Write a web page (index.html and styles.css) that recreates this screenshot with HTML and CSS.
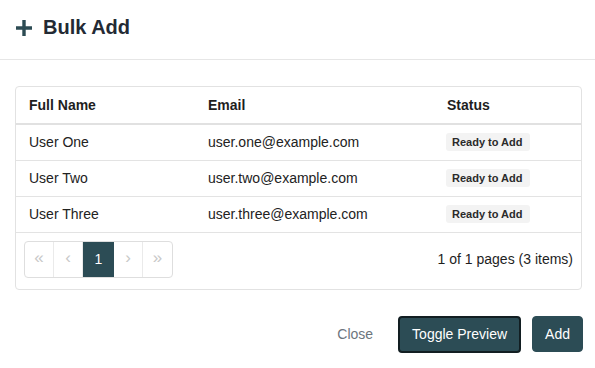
FILE: index.html
```html
<!DOCTYPE html>
<html>
<head>
<meta charset="utf-8">
<link rel="stylesheet" href="styles.css">
</head>
<body>
<div class="modal">
  <div class="modal-header">
    <svg class="plus" width="18" height="18" viewBox="0 0 18 18"><path d="M9 1v16M1 9h16" stroke="#2c4b53" stroke-width="3.4" fill="none"/></svg>
    <h1 class="title">Bulk Add</h1>
  </div>
  <div class="modal-body">
    <div class="card">
      <table class="grid">
        <colgroup><col class="c1"><col class="c2"><col class="c3"></colgroup>
        <thead>
          <tr><th>Full Name</th><th>Email</th><th>Status</th></tr>
        </thead>
        <tbody>
          <tr><td>User One</td><td>user.one@example.com</td><td><span class="badge">Ready to Add</span></td></tr>
          <tr><td>User Two</td><td>user.two@example.com</td><td><span class="badge">Ready to Add</span></td></tr>
          <tr><td>User Three</td><td>user.three@example.com</td><td><span class="badge">Ready to Add</span></td></tr>
        </tbody>
      </table>
      <div class="pager-row">
        <div class="pager">
          <span class="pg">&laquo;</span>
          <span class="pg">&lsaquo;</span>
          <span class="pg active">1</span>
          <span class="pg">&rsaquo;</span>
          <span class="pg">&raquo;</span>
        </div>
        <div class="summary">1 of 1 pages (3 items)</div>
      </div>
    </div>
  </div>
  <div class="modal-footer">
    <button class="btn link">Close</button>
    <button class="btn primary focus">Toggle Preview</button>
    <button class="btn primary">Add</button>
  </div>
</div>
</body>
</html>
```
FILE: styles.css
```css
* { box-sizing: border-box; }
body {
  margin: 0;
  background: #fff;
  font-family: "Liberation Sans", Arial, sans-serif;
  color: #212529;
  font-size: 14px;
}
.modal { width: 595px; }
.modal-header {
  height: 60px;
  border-bottom: 1px solid #e6e6e6;
  display: flex;
  align-items: center;
  padding: 0 15px 4px;
  gap: 10px;
}
.plus { display: block; margin-top: 1px; }
.title {
  margin: 0;
  font-size: 20px;
  font-weight: bold;
  color: #232a34;
}
.modal-body { padding: 26px 13px 0 15px; }
.card {
  border: 1px solid #e2e2e2;
  border-radius: 4px;
}
.grid {
  width: 100%;
  border-collapse: collapse;
  table-layout: fixed;
}
.c1 { width: 179px; }
.c2 { width: 239px; }
.grid th {
  height: 37px;
  text-align: left;
  font-weight: bold;
  padding: 0 13px;
  border-bottom: 2px solid #e1e1e1;
  color: #1e1e1e;
}
.grid td {
  height: 36px;
  padding: 0 13px;
  border-bottom: 1px solid #e3e3e3;
  color: #222;
}
.badge {
  display: inline-block;
  background: #f3f3f3;
  border-radius: 3px;
  font-size: 11px;
  font-weight: bold;
  padding: 3px 7px 3px 6px;
  color: #2a2a2a;
  margin-left: -1px;
}
.pager-row {
  display: flex;
  align-items: center;
  justify-content: space-between;
  padding: 8px 8px 11px 8px;
}
.pager {
  display: flex;
  border: 1px solid #dedede;
  border-radius: 4px;
  height: 37px;
  overflow: hidden;
}
.pg {
  width: 29px;
  display: flex;
  align-items: center;
  justify-content: center;
  color: #c8c8c8;
  font-size: 17px;
  padding-bottom: 2px;
  border-right: 1px solid #eaeaea;
}
.pg:last-child { border-right: none; }
.pg.active {
  background: #2c4c55;
  color: #fff;
  width: 31px;
  font-size: 14px;
  padding-bottom: 0;
  border-right: none;
}
.summary { color: #1e1e1e; margin-right: 0px; }
.modal-footer {
  display: flex;
  justify-content: flex-end;
  align-items: center;
  gap: 11px;
  padding: 26px 12px 0 0;
}
.btn {
  font-family: inherit;
  font-size: 14px;
  height: 36px;
  border-radius: 4px;
  padding: 0 12px;
  cursor: pointer;
}
.btn.link {
  background: none;
  border: none;
  color: #6c757d;
  margin-right: 2px;
}
.btn.primary {
  background: #2c4c55;
  border: 1px solid #2c4c55;
  color: #fff;
}
.btn.focus {
  border: 2px solid #121e22;
  height: 37px;
  width: 123px;
}
```
